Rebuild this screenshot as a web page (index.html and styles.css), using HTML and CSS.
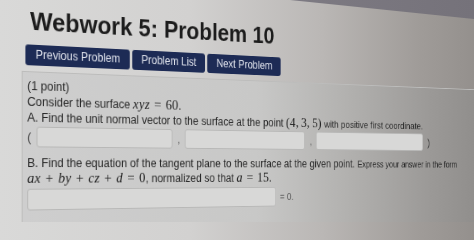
FILE: index.html
```html
<!DOCTYPE html>
<html lang="en">
<head>
<meta charset="utf-8">
<title>Webwork 5: Problem 10</title>
<link rel="stylesheet" href="styles.css">
</head>
<body>
<div class="page">
  <h1 class="title">Webwork 5: Problem 10</h1>
  <nav class="nav">
    <a class="btn" href="#">Previous Problem</a>
    <a class="btn" href="#">Problem List</a>
    <a class="btn" href="#">Next Problem</a>
  </nav>
  <div class="problem">
    <p class="line">(1 point)</p>
    <p class="line">Consider the surface <span class="m"><i>xyz</i> = 60</span>.</p>
    <p class="line">A. Find the unit normal vector to the surface at the point <span class="m">(4,&#8201;3,&#8201;5)</span> <span class="note">with positive first coordinate.</span></p>
    <div class="answers">
      <span class="paren">(</span>
      <input class="ans" type="text" aria-label="component 1">
      <span class="punct">,</span>
      <input class="ans" type="text" aria-label="component 2">
      <span class="punct">,</span>
      <input class="ans" type="text" aria-label="component 3">
      <span class="paren">)</span>
    </div>
    <p class="part-b">B. Find the equation of the tangent plane to the surface at the given point. <span class="note-sm">Express your answer in the form</span><br><span class="m"><i>ax</i> + <i>by</i> + <i>cz</i> + <i>d</i> = 0</span>, normalized so that <span class="m"><i>a</i> = 15</span>.</p>
    <div class="answers plane">
      <input class="ans wide" type="text" aria-label="tangent plane">
      <span class="punct">= 0.</span>
    </div>
  </div>
</div>
</body>
</html>
```
FILE: styles.css
```css
html {
  overflow: hidden;
}

body {
  margin: 0;
  width: 474px;
  height: 222px;
  overflow: hidden;
  position: relative;
  font-family: "Liberation Sans", Arial, sans-serif;
  color: #262626;
  background: linear-gradient(90deg, #d9d9d8 0%, #d2d1d0 40%, #bab7b5 68%, #a09c99 88%, #94908d 100%);
}

body::before {
  content: "";
  position: absolute;
  left: 0;
  top: 0;
  width: 474px;
  height: 22px;
  background: linear-gradient(90deg, #8a8790, #75727a);
  clip-path: polygon(290px 0, 474px 0, 474px 19px);
  z-index: 2;
}

.page {
  width: 640px;
  transform-origin: 0 170px;
  transform: perspective(800px) rotateY(18deg);
}

.title {
  margin: 0;
  padding: 4px 0 0 32px;
  font-size: 26px;
  line-height: 30px;
  font-weight: bold;
  color: #1c1c1c;
  white-space: nowrap;
}

.nav {
  display: flex;
  gap: 3px;
  margin-top: 9px;
  padding-left: 27px;
}

.btn {
  display: block;
  height: 21px;
  line-height: 21px;
  padding: 0 11px;
  font-size: 12px;
  color: #e2e5ee;
  background: #1d2b55;
  border-radius: 3px;
  text-decoration: none;
  white-space: nowrap;
}

.problem {
  margin: 6px 0 0 23px;
  padding: 7px 0 60px 5px;
  border: 1px solid #bcbcbb;
  border-right: none;
  background: linear-gradient(90deg, #cecece 0%, #c8c8c7 45%, #b2b1af 65%, #9b9997 85%, #8d8b89 100%);
  font-size: 12.5px;
}

.line {
  margin: 0;
  line-height: 15px;
  white-space: nowrap;
}

.m {
  font-family: "Liberation Serif", "Times New Roman", serif;
  font-size: 15px;
  letter-spacing: 0.3px;
  word-spacing: 1px;
  line-height: 1;
  color: #1c1c1c;
}

.note {
  font-size: 11.5px;
}

.note-sm {
  font-size: 10.5px;
}

.answers {
  display: flex;
  align-items: center;
  gap: 6px;
  margin-top: 1px;
}

.punct {
  font-size: 11px;
  color: #5a5a5a;
}

.paren {
  font-size: 13px;
  color: #444;
}

.ans {
  box-sizing: border-box;
  width: 156px;
  height: 21px;
  margin: 0;
  padding: 0;
  border: 1px solid #b8b8b7;
  border-radius: 3px;
  background: #d8d8d7;
}

.part-b {
  margin: 10px 0 0;
  line-height: 13.5px;
  white-space: nowrap;
}

.plane {
  margin-top: 3px;
  gap: 5px;
}

.ans.wide {
  width: 298px;
  height: 22px;
}
```
